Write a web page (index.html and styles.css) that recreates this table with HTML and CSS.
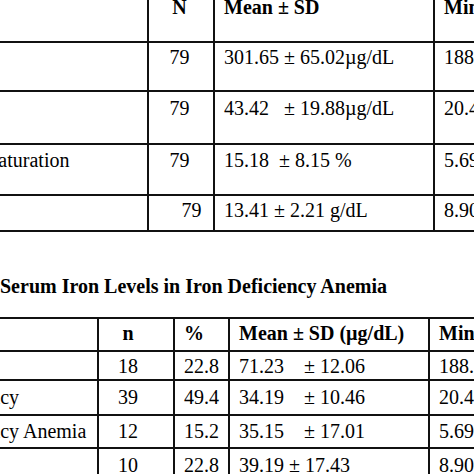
FILE: index.html
```html
<!DOCTYPE html>
<html lang="en">
<head>
<meta charset="utf-8">
<title>Iron studies tables</title>
<link rel="stylesheet" href="styles.css">
</head>
<body>
<div class="page">
  <table class="tbl t1">
    <colgroup>
      <col class="w267"><col class="w66"><col class="w220"><col class="w200">
    </colgroup>
    <tr class="rh50">
      <th class="label"></th>
      <th class="num n1">N</th>
      <th class="txt">Mean ± SD</th>
      <th class="txt">Minimum</th>
    </tr>
    <tr class="rh49">
      <td class="label">TIBC</td>
      <td class="num n1">79</td>
      <td class="txt">301.65 ± 65.02µg/dL</td>
      <td class="txt">188.00 µg/dL</td>
    </tr>
    <tr class="rh53 lo">
      <td class="label">Serum Iron</td>
      <td class="num n1">79</td>
      <td class="txt">43.42   ± 19.88µg/dL</td>
      <td class="txt">20.45 µg/dL</td>
    </tr>
    <tr class="rh51 mid">
      <td class="label">Transferrin Saturation</td>
      <td class="num n1">79</td>
      <td class="txt">15.18  ± 8.15 %</td>
      <td class="txt">5.69 %</td>
    </tr>
    <tr class="rh36">
      <td class="label">Hemoglobin</td>
      <td class="num n1 shift">79</td>
      <td class="txt">13.41 ± 2.21 g/dL</td>
      <td class="txt">8.90 g/dL</td>
    </tr>
  </table>

  <p class="caption">Serum Iron Levels in Iron Deficiency Anemia</p>

  <table class="tbl t2">
    <colgroup>
      <col class="w217"><col class="w76"><col class="w55"><col class="w200"><col class="w200">
    </colgroup>
    <tr class="rh33">
      <th class="label"></th>
      <th class="num n2">n</th>
      <th class="num pct">%</th>
      <th class="txt">Mean ± SD (µg/dL)</th>
      <th class="txt">Minimum</th>
    </tr>
    <tr class="rh29">
      <td class="label">Normal</td>
      <td class="num n2">18</td>
      <td class="num">22.8</td>
      <td class="txt">71.23    ± 12.06</td>
      <td class="txt">188.00</td>
    </tr>
    <tr class="rh35 lo">
      <td class="label">Iron Deficiency</td>
      <td class="num n2">39</td>
      <td class="num">49.4</td>
      <td class="txt">34.19    ± 10.46</td>
      <td class="txt">20.45</td>
    </tr>
    <tr class="rh33 mid">
      <td class="label">Iron Deficiency Anemia</td>
      <td class="num n2">12</td>
      <td class="num">15.2</td>
      <td class="txt">35.15    ± 17.01</td>
      <td class="txt">5.69</td>
    </tr>
    <tr class="rh33 lo">
      <td class="label">Other</td>
      <td class="num n2">10</td>
      <td class="num">22.8</td>
      <td class="txt">39.19 ± 17.43</td>
      <td class="txt">8.90</td>
    </tr>
  </table>
</div>
</body>
</html>
```

FILE: styles.css
```css
html, body {
  margin: 0;
  padding: 0;
  background: #ffffff;
}

body {
  width: 474px;
  height: 474px;
  overflow: hidden;
  font-family: "Liberation Serif", "Times New Roman", serif;
  font-size: 20px;
  color: #000000;
}

.page {
  margin-left: -120px;
}

.tbl {
  border-collapse: collapse;
  table-layout: fixed;
}

.t1 {
  width: 753px;
  margin-top: -9px;
}

.t2 {
  width: 748px;
}

.w267 { width: 267px; }
.w66  { width: 66px; }
.w220 { width: 220px; }
.w200 { width: 200px; }
.w217 { width: 217px; }
.w76  { width: 76px; }
.w55  { width: 55px; }

.tbl th,
.tbl td {
  box-sizing: border-box;
  border: 2px solid #111111;
  padding: 3px 9px 0 9px;
  vertical-align: top;
  white-space: pre;
  text-align: left;
  font-weight: normal;
  line-height: normal;
}

.tbl th {
  font-weight: bold;
}

.tbl .label {
  padding-left: 11px;
}

.tbl .num {
  text-align: center;
}

.tbl .n1 {
  padding-right: 12px;
}

.tbl .n1.shift {
  padding-left: 21px;
  padding-right: 0;
}

.tbl .n2 {
  padding-right: 25px;
}

.tbl .pct {
  padding-right: 27px;
}

.tbl tr.lo td { padding-top: 5px; }
.tbl tr.mid td { padding-top: 4px; }

.rh50 > * { height: 50px; }
.rh49 > * { height: 49px; }
.rh53 > * { height: 53px; }
.rh51 > * { height: 51px; }
.rh36 > * { height: 36px; }
.rh29 > * { height: 29px; }
.rh35 > * { height: 35px; }
.rh33 > * { height: 33px; }

.caption {
  margin: 43px 0 19px 120px;
  font-weight: bold;
  line-height: normal;
  white-space: nowrap;
}
```
